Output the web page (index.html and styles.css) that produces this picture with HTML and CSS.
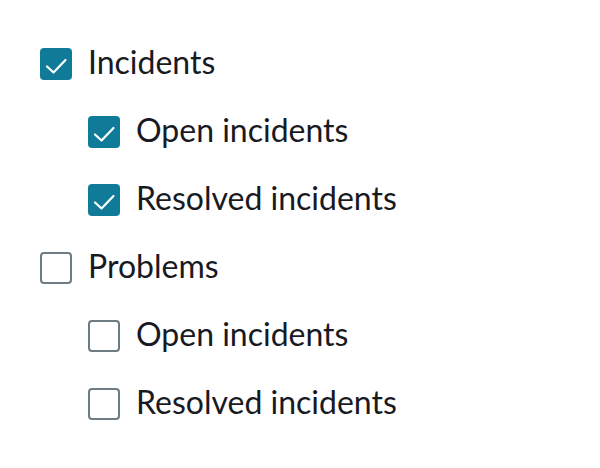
FILE: index.html
```html
<!DOCTYPE html>
<html>
<head>
<meta charset="utf-8">
<link rel="stylesheet" href="styles.css">
</head>
<body>
<div class="tree">
  <label class="item">
    <span class="box checked"><svg viewBox="0 0 32 32" width="32" height="32"><path d="M7 18.5 L13.5 24.5 L25.5 12" fill="none" stroke="#fff" stroke-width="2.2" stroke-linecap="round" stroke-linejoin="round"/></svg></span>
    <span class="label">Incidents</span>
  </label>
  <label class="item child">
    <span class="box checked"><svg viewBox="0 0 32 32" width="32" height="32"><path d="M7 18.5 L13.5 24.5 L25.5 12" fill="none" stroke="#fff" stroke-width="2.2" stroke-linecap="round" stroke-linejoin="round"/></svg></span>
    <span class="label">Open incidents</span>
  </label>
  <label class="item child">
    <span class="box checked"><svg viewBox="0 0 32 32" width="32" height="32"><path d="M7 18.5 L13.5 24.5 L25.5 12" fill="none" stroke="#fff" stroke-width="2.2" stroke-linecap="round" stroke-linejoin="round"/></svg></span>
    <span class="label">Resolved incidents</span>
  </label>
  <label class="item">
    <span class="box"></span>
    <span class="label">Problems</span>
  </label>
  <label class="item child">
    <span class="box"></span>
    <span class="label">Open incidents</span>
  </label>
  <label class="item child">
    <span class="box"></span>
    <span class="label">Resolved incidents</span>
  </label>
</div>
</body>
</html>
```
FILE: styles.css
```css
html, body {
  margin: 0;
  padding: 0;
  background: #ffffff;
}
body {
  font-family: Lato, "Liberation Sans", sans-serif;
  color: #181a1f;
}
.tree {
  display: flex;
  flex-direction: column;
  padding: 30px 0 0 40px;
}
.item {
  display: flex;
  align-items: center;
  height: 68px;
  gap: 16px;
}
.item.child {
  padding-left: 48px;
}
.box {
  width: 32px;
  height: 32px;
  box-sizing: border-box;
  border: 2px solid #6f7b82;
  border-radius: 4px;
  flex: none;
  display: block;
  position: relative;
}
.box.checked {
  background: #0f7b99;
  border-color: #0f7b99;
}
.box svg {
  position: absolute;
  left: -2px;
  top: -2px;
}
.label {
  font-size: 32px;
  line-height: 1;
  position: relative;
  top: -2px;
}
```
